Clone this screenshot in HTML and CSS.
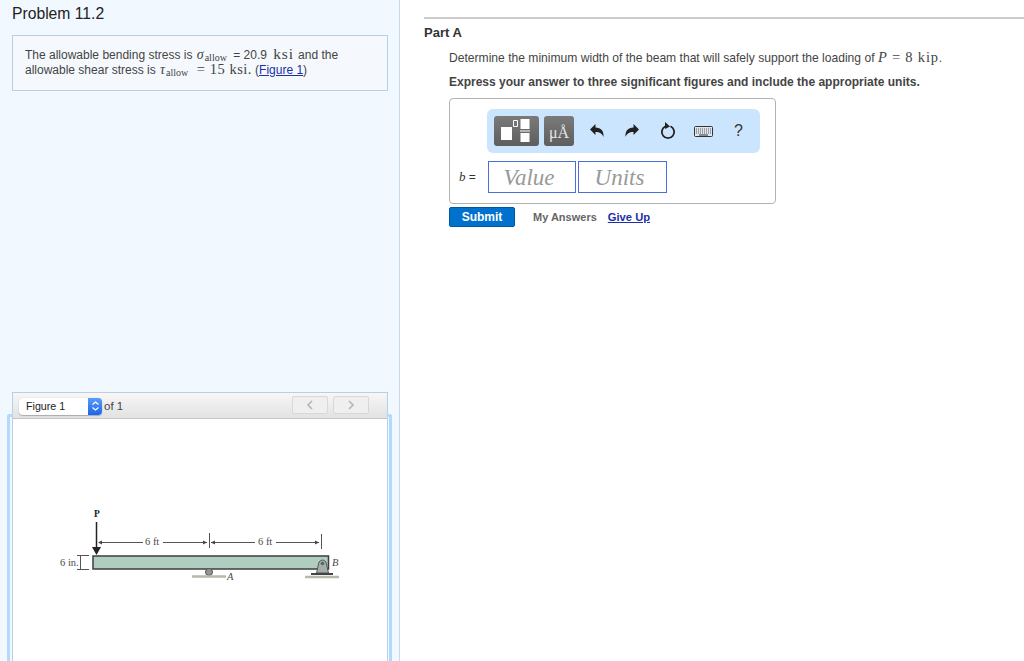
FILE: index.html
```html
<!DOCTYPE html>
<html lang="en">
<head>
<meta charset="utf-8">
<title>Problem 11.2</title>
<link rel="stylesheet" href="styles.css">
</head>
<body>
<div class="page">
  <aside class="left">
    <h1 class="title">Problem 11.2</h1>
    <div class="statement">
      <p>The allowable bending stress is <span class="math"><i class="greek">σ</i><span class="sub">allow</span></span> = 20.9 <span class="math wide">ksi</span> and the</p>
      <p>allowable shear stress is <span class="math"><i class="greek">τ</i><span class="sub">allow</span></span> <span class="math eq">= 15 ksi.</span> (<a href="#">Figure 1</a>)</p>
    </div>
    <section class="figure">
      <div class="figure-head">
        <div class="select"><span class="select-label">Figure 1</span><span class="select-btn">
          <svg width="9" height="12" viewBox="0 0 9 12"><path d="M1.500 4.500 4.500 2l3 2.500M1.500 7.500l3 2.500 3-2.500" fill="none" stroke="#fff" stroke-width="1.300"/></svg>
        </span></div>
        <span class="of">of 1</span>
        <div class="pager">
          <span class="page-btn"><svg width="8" height="10" viewBox="0 0 8 10"><path d="M6 1 2 5l4 4" fill="none" stroke="#b5b5b5" stroke-width="1.600"/></svg></span>
          <span class="page-btn"><svg width="8" height="10" viewBox="0 0 8 10"><path d="M2 1l4 4-4 4" fill="none" stroke="#b5b5b5" stroke-width="1.600"/></svg></span>
        </div>
      </div>
      <div class="figure-body">
        <svg class="beam" width="300" height="90" viewBox="0 0 300 90">
          <g fill="none" stroke="#555" stroke-width="1">
            <path d="M48 37.500h44M112 37.500h44M158.500 28v15M160 37.500h44M225 37.500h43M270.500 29v15"/>
            <path d="M26 50.500h12M26 64.500h12M29.500 51v13"/>
          </g>
          <path d="M45.500 17v29" stroke="#222" stroke-width="1.500"/>
          <path d="M41 42h9l-4.500 8z" fill="#222"/>
          <path d="M47 37.500l4-2v4zM156 37.500l-4-2v4zM160 37.500l4-2v4zM268 37.500l-4-2v4z" fill="#444"/>
          <rect x="42" y="51" width="235.500" height="13" fill="#b0cdc0" stroke="#3c3f3e" stroke-width="1.500"/>
          <circle cx="158" cy="67" r="3.500" fill="#8d9794" stroke="#555"/>
          <path d="M141 71.500h34" stroke="#b9b8a8" stroke-width="2.500"/>
          <path d="M254 72h34" stroke="#b9b8a8" stroke-width="2.500"/>
          <path d="M260 68h22v2h-22z" fill="#444"/>
          <path d="M265.500 68l2.500-11q3.500-4 7 0l2.500 11z" fill="#a3adaa" stroke="#444" stroke-width=".8"/>
          <circle cx="271.500" cy="58.500" r="1.800" fill="#5a6664"/>
          <text class="dim bold" x="43" y="12">P</text>
          <text class="dim" x="94" y="40">6 ft</text>
          <text class="dim" x="207" y="40">6 ft</text>
          <text class="dim" x="9" y="61">6 in.</text>
          <text class="dim it" x="176" y="75">A</text>
          <text class="dim it" x="281" y="61">B</text>
        </svg>
      </div>
    </section>
  </aside>
  <main class="right">
    <hr class="rule">
    <h2 class="part">Part A</h2>
    <div class="content">
      <p class="question">Determine the minimum width of the beam that will safely support the loading of <span class="math"><i>P</i> = 8 kip</span>.</p>
      <p class="instruction">Express your answer to three significant figures and include the appropriate units.</p>
      <div class="answer">
        <div class="toolbar">
          <span class="tool-btn tpl">
            <svg width="32" height="24" viewBox="0 0 32 24"><path fill="#fff" d="M0 8h11v13H0zM19.500 0h9v10h-9zM19.500 14h9v9h-9zM19 11.500h10v1H19z"/><path fill="none" stroke="#fff" d="M12.500 1.500h4v6h-4z"/></svg>
          </span>
          <span class="tool-btn unit">μÅ</span>
          <svg class="ic" width="14" height="14" viewBox="0 0 14 14"><path fill="#222" d="M0 5.500 5.500 0v3.500C11 3.500 14 7 13.500 13 12 9.500 10 8 5.500 8v3z"/></svg>
          <svg class="ic" width="14" height="14" viewBox="0 0 14 14"><path fill="#222" d="M14 5.500 8.500 0v3.500C3 3.500 0 7 .5 13 2 9.500 4 8 8.500 8v3z"/></svg>
          <svg class="ic" width="16" height="18" viewBox="0 0 16 18"><path fill="none" stroke="#222" stroke-width="1.800" d="M10.500 4.300a6.200 6.200 0 1 1-5 0"/><path fill="#222" d="M5 0l5 4.500-5 2.500z"/></svg>
          <svg class="ic" width="19" height="11" viewBox="0 0 19 11"><rect x=".5" y=".5" width="18" height="10" rx="1" fill="#dfe7ee" stroke="#333"/><path stroke="#555" stroke-dasharray="1 1" d="M2 3h15M2 5h15M2 7h15"/><path stroke="#333" d="M5 9h9"/></svg>
          <span class="help">?</span>
        </div>
        <div class="input-row">
          <span class="var"><i>b</i> =</span>
          <span class="field field-value">Value</span>
          <span class="field">Units</span>
        </div>
      </div>
      <div class="actions">
        <button class="submit" type="button">Submit</button>
        <span class="my">My Answers</span>
        <a class="give" href="#">Give Up</a>
      </div>
    </div>
  </main>
</div>
</body>
</html>
```
FILE: styles.css
```css
* { box-sizing: border-box; }
html, body { margin: 0; height: 661px; overflow: hidden; background: #fff; }
body { font-family: "Liberation Sans", Arial, sans-serif; color: #333; font-size: 12px; }
p { margin: 0; }
.page { display: flex; height: 661px; overflow: hidden; }

.left { width: 400px; flex: none; height: 661px; background: #f2f8ff; border-right: 1px solid #c8d9ea; padding: 5px 12px 0; position: relative; overflow: hidden; }
.title { margin: 0; font-size: 15.700px; line-height: 18px; font-weight: 400; color: #222; }
.statement { margin-top: 12px; width: 376px; height: 56px; background: #f5f9fe; border: 1px solid #b8d0e4; padding: 12px 12px 0; font-size: 12px; line-height: 15px; color: #444; }
.statement p { height: 15px; white-space: nowrap; }
.math { font-family: "Liberation Serif", serif; line-height: 0; }
.greek { font-size: 14px; margin-left: 1px; }
.sub { font-size: 10px; position: relative; top: 2px; margin-left: 1px; margin-right: 3px; line-height: 0; }
.wide { font-size: 15.500px; letter-spacing: .8px; margin-left: 3px; margin-right: 1px; }
.eq { font-size: 14.500px; letter-spacing: .4px; word-spacing: .5px; margin-left: 2px; }
a { color: #1a2fa8; }

.figure { position: relative; margin-top: 301px; width: 376px; height: 290px; background: #fff; border: 1px solid #b8d0e4; border-bottom: 0; }
.figure::before { content: ""; position: absolute; left: -6px; right: -5px; top: 21px; bottom: 0; border: 3px solid #b3d9ff; border-bottom: 0; border-radius: 3px 3px 0 0; z-index: 0; }
.figure-head { position: relative; z-index: 1; height: 26px; background: linear-gradient(#f7f7f7, #e2e2e2); border-bottom: 1px solid #c6c6c6; display: flex; align-items: center; padding: 0 18px 0 6px; }
.select { width: 83px; height: 17px; margin-top: 1px; display: flex; background: #fff; border-radius: 4px; box-shadow: 0 1px 1px #aaa, 0 0 1px #bbb; overflow: hidden; }
.select-label { flex: 1; font-size: 10.700px; line-height: 17px; padding-left: 7px; color: #222; }
.select-btn { width: 14px; display: flex; align-items: center; justify-content: center; background: linear-gradient(#5b9cf5, #1c63f0); }
.of { margin-left: 2px; font-size: 11.500px; color: #444; }
.pager { margin-left: auto; display: flex; gap: 5px; margin-top: -2px; }
.page-btn { width: 36px; height: 18px; border: 1px solid #d8d8d8; border-radius: 2px; display: flex; align-items: center; justify-content: center; background: #efefef; }
.figure-body { position: relative; z-index: 1; height: 264px; background: #fff; padding: 86px 0 0 38px; }
.beam { display: block; }
.dim { font-family: "Liberation Serif", serif; font-size: 10.500px; fill: #4a4a4a; }
.bold { font-weight: 700; font-size: 9.500px; fill: #222; }
.it { font-style: italic; }

.right { flex: 1; padding: 17px 0 0 24px; min-width: 0; }
.rule { margin: 0; border: 0; height: 2px; background: #ccc; }
.part { margin: 6px 0 0; font-size: 13px; line-height: 16px; font-weight: 700; color: #333; }
.content { padding: 0 0 0 25px; }
.question { margin-top: 9px; font-size: 12.100px; line-height: 16px; color: #444; white-space: nowrap; }
.question .math { font-size: 14.500px; letter-spacing: .8px; }
.instruction { margin-top: 8px; font-size: 12px; line-height: 16px; font-weight: 700; color: #444; white-space: nowrap; }
.answer { margin-top: 8px; width: 327px; height: 106px; border: 1px solid #b3b3b3; border-radius: 4px; padding: 10px 0 0 37px; }
.toolbar { width: 273px; height: 44px; background: #cce5ff; border-radius: 6px; display: flex; align-items: center; padding-left: 7px; }
.tool-btn { height: 30px; border-radius: 3px; background: linear-gradient(#7a7a7a, #5e5e5e); display: flex; align-items: center; justify-content: center; color: #e6e6e6; }
.tpl { width: 45px; }
.unit { width: 30px; margin-left: 5px; padding-top: 3px; font-family: "Liberation Serif", serif; font-size: 16px; }
.toolbar .ic:nth-of-type(1) { margin-left: 16px; }
.toolbar .ic:nth-of-type(2) { margin-left: 21px; }
.toolbar .ic:nth-of-type(3) { margin-left: 21px; }
.toolbar .ic:nth-of-type(4) { margin-left: 18px; }
.help { margin-left: 21px; font-size: 16px; color: #333; }
.input-row { display: flex; align-items: center; gap: 2px; margin-top: 8px; margin-left: -28px; }
.var { width: 27px; font-size: 12px; color: #333; }
.var i { font-family: "Liberation Serif", serif; font-size: 13px; }
.field { width: 89px; height: 32px; border: 1px solid #4a6fd8; font-family: "Liberation Serif", serif; font-style: italic; font-size: 23px; line-height: 31px; color: #999; text-align: center; padding-right: 6px; background: #fff; }
.field-value { width: 88px; }
.actions { display: flex; align-items: center; margin-top: 3px; }
.submit { width: 66px; height: 20px; padding: 0; border: 1px solid #005a9e; border-radius: 2px; background: #0072ce; color: #fff; font: 700 12px "Liberation Sans", sans-serif; }
.my { margin-left: 18px; font-size: 11px; font-weight: 700; color: #666; }
.give { margin-left: 11px; font-size: 11.200px; font-weight: 700; color: #1a2fa8; }
```
